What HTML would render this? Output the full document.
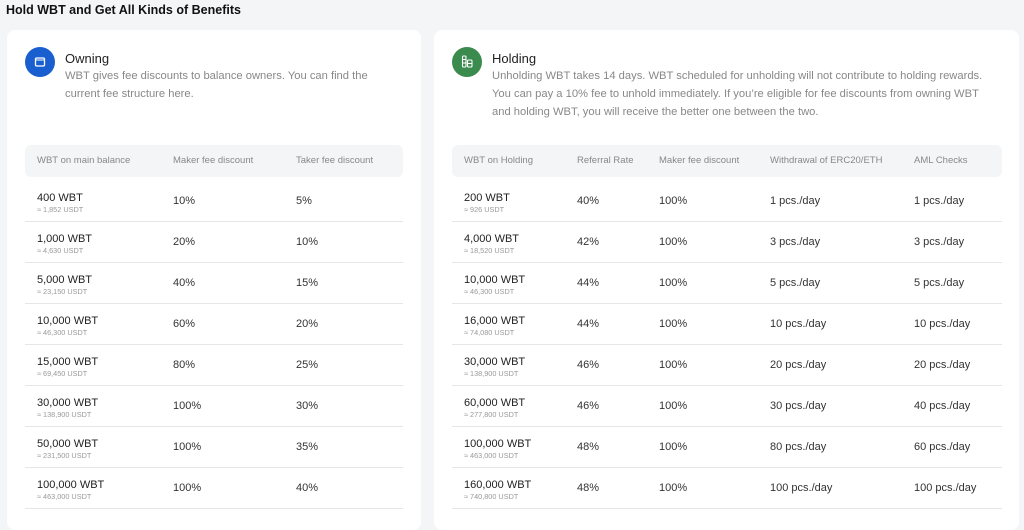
<!DOCTYPE html>
<html><head><meta charset="utf-8">
<style>
*{margin:0;padding:0;box-sizing:border-box}
body{width:1024px;height:510px;overflow:hidden;background:#f4f5f7;font-family:"Liberation Sans",sans-serif;position:relative;color:#222}
.h1{position:absolute;left:6px;top:3px;font-size:12.5px;font-weight:bold;color:#111}
.card{position:absolute;top:30px;height:500px;background:#fff;border-radius:8px}
.ic{position:absolute;width:30px;height:30px;border-radius:50%}
.t{position:absolute;font-size:13px;color:#222}
.d{position:absolute;font-size:11.2px;color:#888;line-height:18px}
.hd{position:absolute;top:145px;height:32px;background:#f4f5f7;border-radius:6px}
.hd span{position:absolute;top:10px;font-size:9.5px;color:#888;white-space:nowrap}
.row{position:absolute;height:41px;border-bottom:1px solid #e6e6e6}
.row .m{position:absolute;top:11px;font-size:11px;color:#222;white-space:nowrap}
.row .s{position:absolute;top:24px;font-size:7.3px;color:#999;white-space:nowrap}
.row .v{position:absolute;top:14px;font-size:11px;color:#333;white-space:nowrap}
</style></head><body>
<div class="h1">Hold WBT and Get All Kinds of Benefits</div>

<div class="card" style="left:7px;width:414px"></div>
<div class="ic" style="left:25px;top:47px;background:#1a5fcf"><svg width="30" height="30"><rect x="10.5" y="11" width="9" height="8" rx="1.2" fill="none" stroke="#fff" stroke-width="1.3"/><line x1="10.5" y1="13" x2="19.5" y2="13" stroke="#fff" stroke-width="1"/></svg></div>
<div class="t" style="left:65px;top:51px">Owning</div>
<div class="d" style="left:65px;top:67px;width:318px">WBT gives fee discounts to balance owners. You can find the current fee structure here.</div>
<div class="hd" style="left:25px;width:378px"><span style="left:12px">WBT on main balance</span><span style="left:148px">Maker fee discount</span><span style="left:271px">Taker fee discount</span></div>

<div class="card" style="left:434px;width:585px"></div>
<div class="ic" style="left:452px;top:47px;background:#3b8a4e"><svg width="30" height="30"><g fill="none" stroke="#fff" stroke-width="1.1"><rect x="10.5" y="9" width="3.5" height="11" rx="1"/><line x1="10.5" y1="12.5" x2="14" y2="12.5"/><line x1="10.5" y1="16" x2="14" y2="16"/><rect x="15.5" y="13" width="4.5" height="7" rx="1"/><line x1="15.5" y1="16.5" x2="20" y2="16.5"/></g></svg></div>
<div class="t" style="left:492px;top:51px">Holding</div>
<div class="d" style="left:492px;top:67px;width:510px">Unholding WBT takes 14 days. WBT scheduled for unholding will not contribute to holding rewards.<br>You can pay a 10% fee to unhold immediately. If you’re eligible for fee discounts from owning WBT<br>and holding WBT, you will receive the better one between the two.</div>
<div class="hd" style="left:452px;width:550px"><span style="left:12px">WBT on Holding</span><span style="left:125px">Referral Rate</span><span style="left:207px">Maker fee discount</span><span style="left:318px">Withdrawal of ERC20/ETH</span><span style="left:462px">AML Checks</span></div>

<div class="row" style="left:25px;width:378px;top:181px"><div class="m" style="left:12px">400 WBT</div><div class="s" style="left:12px">≈ 1,852 USDT</div><div class="v" style="left:148px">10%</div><div class="v" style="left:271px">5%</div></div>
<div class="row" style="left:25px;width:378px;top:222px"><div class="m" style="left:12px">1,000 WBT</div><div class="s" style="left:12px">≈ 4,630 USDT</div><div class="v" style="left:148px">20%</div><div class="v" style="left:271px">10%</div></div>
<div class="row" style="left:25px;width:378px;top:263px"><div class="m" style="left:12px">5,000 WBT</div><div class="s" style="left:12px">≈ 23,150 USDT</div><div class="v" style="left:148px">40%</div><div class="v" style="left:271px">15%</div></div>
<div class="row" style="left:25px;width:378px;top:304px"><div class="m" style="left:12px">10,000 WBT</div><div class="s" style="left:12px">≈ 46,300 USDT</div><div class="v" style="left:148px">60%</div><div class="v" style="left:271px">20%</div></div>
<div class="row" style="left:25px;width:378px;top:345px"><div class="m" style="left:12px">15,000 WBT</div><div class="s" style="left:12px">≈ 69,450 USDT</div><div class="v" style="left:148px">80%</div><div class="v" style="left:271px">25%</div></div>
<div class="row" style="left:25px;width:378px;top:386px"><div class="m" style="left:12px">30,000 WBT</div><div class="s" style="left:12px">≈ 138,900 USDT</div><div class="v" style="left:148px">100%</div><div class="v" style="left:271px">30%</div></div>
<div class="row" style="left:25px;width:378px;top:427px"><div class="m" style="left:12px">50,000 WBT</div><div class="s" style="left:12px">≈ 231,500 USDT</div><div class="v" style="left:148px">100%</div><div class="v" style="left:271px">35%</div></div>
<div class="row" style="left:25px;width:378px;top:468px"><div class="m" style="left:12px">100,000 WBT</div><div class="s" style="left:12px">≈ 463,000 USDT</div><div class="v" style="left:148px">100%</div><div class="v" style="left:271px">40%</div></div>

<div class="row" style="left:452px;width:550px;top:181px"><div class="m" style="left:12px">200 WBT</div><div class="s" style="left:12px">≈ 926 USDT</div><div class="v" style="left:125px">40%</div><div class="v" style="left:207px">100%</div><div class="v" style="left:318px">1 pcs./day</div><div class="v" style="left:462px">1 pcs./day</div></div>
<div class="row" style="left:452px;width:550px;top:222px"><div class="m" style="left:12px">4,000 WBT</div><div class="s" style="left:12px">≈ 18,520 USDT</div><div class="v" style="left:125px">42%</div><div class="v" style="left:207px">100%</div><div class="v" style="left:318px">3 pcs./day</div><div class="v" style="left:462px">3 pcs./day</div></div>
<div class="row" style="left:452px;width:550px;top:263px"><div class="m" style="left:12px">10,000 WBT</div><div class="s" style="left:12px">≈ 46,300 USDT</div><div class="v" style="left:125px">44%</div><div class="v" style="left:207px">100%</div><div class="v" style="left:318px">5 pcs./day</div><div class="v" style="left:462px">5 pcs./day</div></div>
<div class="row" style="left:452px;width:550px;top:304px"><div class="m" style="left:12px">16,000 WBT</div><div class="s" style="left:12px">≈ 74,080 USDT</div><div class="v" style="left:125px">44%</div><div class="v" style="left:207px">100%</div><div class="v" style="left:318px">10 pcs./day</div><div class="v" style="left:462px">10 pcs./day</div></div>
<div class="row" style="left:452px;width:550px;top:345px"><div class="m" style="left:12px">30,000 WBT</div><div class="s" style="left:12px">≈ 138,900 USDT</div><div class="v" style="left:125px">46%</div><div class="v" style="left:207px">100%</div><div class="v" style="left:318px">20 pcs./day</div><div class="v" style="left:462px">20 pcs./day</div></div>
<div class="row" style="left:452px;width:550px;top:386px"><div class="m" style="left:12px">60,000 WBT</div><div class="s" style="left:12px">≈ 277,800 USDT</div><div class="v" style="left:125px">46%</div><div class="v" style="left:207px">100%</div><div class="v" style="left:318px">30 pcs./day</div><div class="v" style="left:462px">40 pcs./day</div></div>
<div class="row" style="left:452px;width:550px;top:427px"><div class="m" style="left:12px">100,000 WBT</div><div class="s" style="left:12px">≈ 463,000 USDT</div><div class="v" style="left:125px">48%</div><div class="v" style="left:207px">100%</div><div class="v" style="left:318px">80 pcs./day</div><div class="v" style="left:462px">60 pcs./day</div></div>
<div class="row" style="left:452px;width:550px;top:468px"><div class="m" style="left:12px">160,000 WBT</div><div class="s" style="left:12px">≈ 740,800 USDT</div><div class="v" style="left:125px">48%</div><div class="v" style="left:207px">100%</div><div class="v" style="left:318px">100 pcs./day</div><div class="v" style="left:462px">100 pcs./day</div></div>
</body></html>
